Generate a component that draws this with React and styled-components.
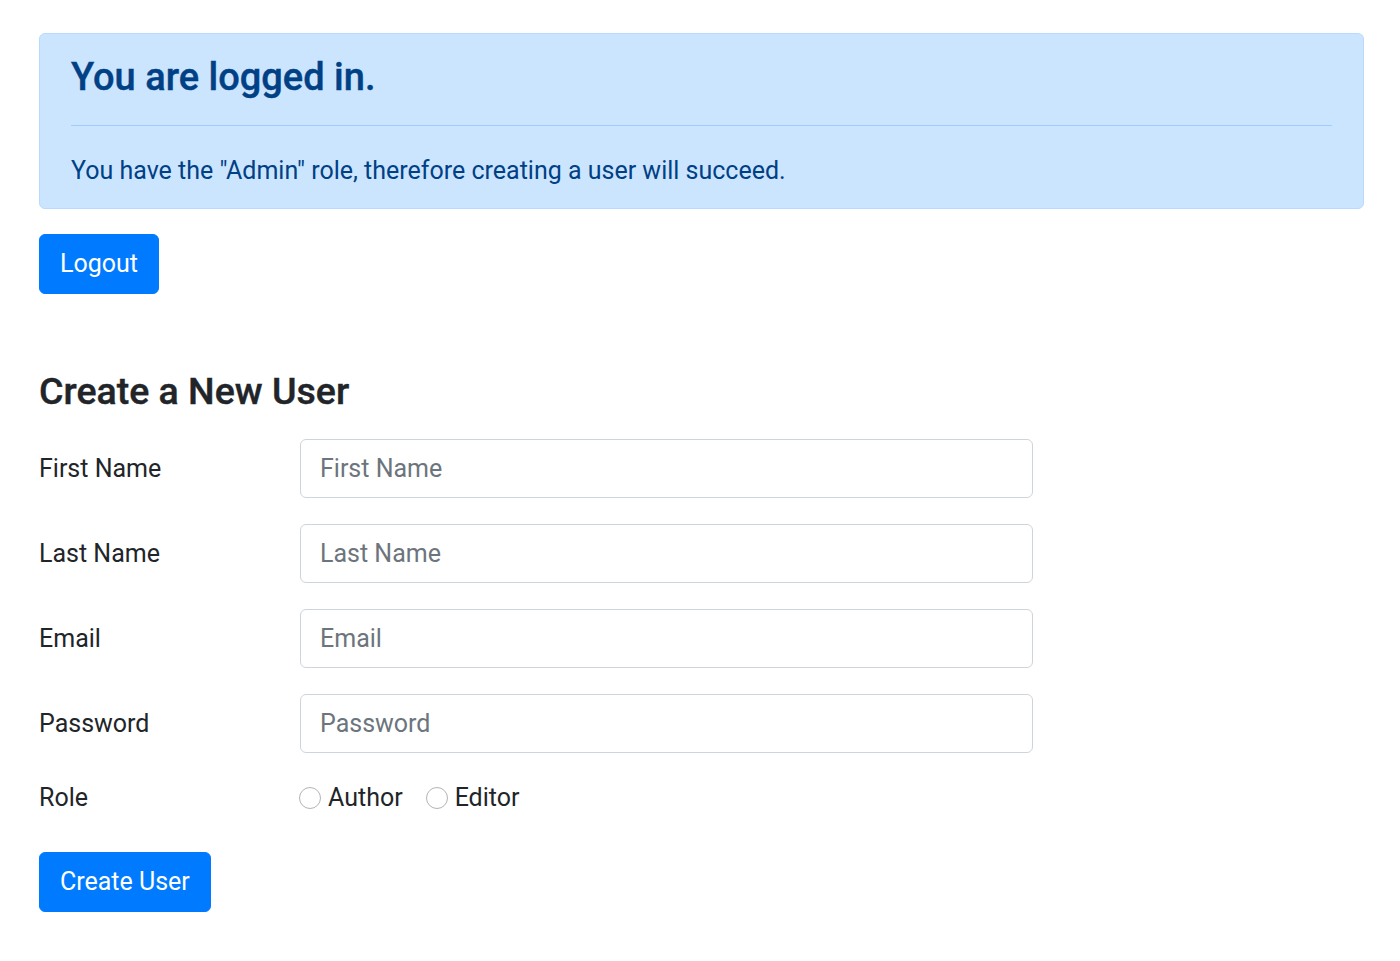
import styled, { createGlobalStyle } from "styled-components";

const GlobalStyle = createGlobalStyle`
  * { box-sizing: border-box; }
  body {
    margin: 0;
    background: #fff;
    font-family: Roboto, "Liberation Sans", Arial, sans-serif;
    color: #212529;
    font-size: 25px;
    line-height: 1.5;
  }
`;

const Page = styled.div`
  padding: 33px 36px 40px 39px;
`;

const Alert = styled.div`
  background: #cce5ff;
  border: 1px solid #b8daff;
  border-radius: 6px;
  color: #004085;
  padding: 21px 31px 19px;
`;

const AlertHeading = styled.h4`
  margin: 0;
  font-size: 38px;
  font-weight: 500;
  line-height: 1.2;
  -webkit-text-stroke: 0.4px currentColor;
`;

const Rule = styled.hr`
  border: 0;
  border-top: 1.5px solid #9fcdff;
  margin: 24px 0 26px;
`;

const AlertText = styled.p`
  margin: 0;
`;

const Button = styled.button`
  display: inline-block;
  background: #007bff;
  color: #fff;
  border: 1px solid #007bff;
  border-radius: 6px;
  font-family: inherit;
  font-size: 25px;
  line-height: 36px;
  padding: 11px 20px;
  cursor: pointer;
`;

const Actions = styled.div`
  margin-top: 25px;
`;

const Title = styled.h3`
  margin: 75px 0 25px;
  font-size: 37.5px;
  font-weight: 500;
  line-height: 1.2;
  color: #212529;
  -webkit-text-stroke: 0.4px currentColor;
`;

const Form = styled.form`
  display: flex;
  flex-direction: column;
  gap: 26px;
`;

const Row = styled.div`
  display: grid;
  grid-template-columns: 261px 733px;
  align-items: center;
`;

const Label = styled.label`
  font-size: 25px;
`;

const Input = styled.input`
  height: 59px;
  width: 100%;
  border: 1.5px solid #ced4da;
  border-radius: 6px;
  padding: 0 19px;
  font-family: inherit;
  font-size: 25px;
  color: #495057;
  &::placeholder { color: #6c757d; }
`;

const Radios = styled.div`
  display: flex;
  align-items: center;
  gap: 24px;
`;

const RadioLabel = styled.label`
  display: flex;
  align-items: center;
  gap: 7px;
`;

const Radio = styled.span`
  width: 22px;
  height: 22px;
  border-radius: 50%;
  border: 1.5px solid #b4b4b4;
  background: #fff;
  margin-left: -1px;
`;

const SubmitRow = styled.div`
  margin-top: 9px;
`;

const fields = ["First Name", "Last Name", "Email", "Password"];

export default function App() {
  return (
    <Page>
      <GlobalStyle />
      <Alert>
        <AlertHeading>You are logged in.</AlertHeading>
        <Rule />
        <AlertText>You have the "Admin" role, therefore creating a user will succeed.</AlertText>
      </Alert>
      <Actions>
        <Button>Logout</Button>
      </Actions>
      <Title>Create a New User</Title>
      <Form onSubmit={(e) => e.preventDefault()}>
        {fields.map((f) => (
          <Row key={f}>
            <Label>{f}</Label>
            <Input placeholder={f} type={f === "Password" ? "password" : "text"} />
          </Row>
        ))}
        <Row>
          <Label>Role</Label>
          <Radios>
            <RadioLabel><Radio />Author</RadioLabel>
            <RadioLabel><Radio />Editor</RadioLabel>
          </Radios>
        </Row>
        <SubmitRow>
          <Button type="submit">Create User</Button>
        </SubmitRow>
      </Form>
    </Page>
  );
}
